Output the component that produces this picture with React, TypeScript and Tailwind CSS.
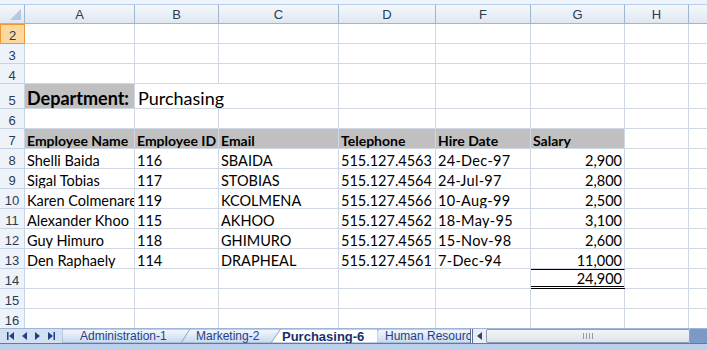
import React from 'react'

const cols = [
  { key: 'A', w: 'w-[110px]' },
  { key: 'B', w: 'w-[84px]' },
  { key: 'C', w: 'w-[120px]' },
  { key: 'D', w: 'w-[97px]' },
  { key: 'F', w: 'w-[95px]' },
  { key: 'G', w: 'w-[94px]' },
  { key: 'H', w: 'w-[64px]' },
  { key: 'I', w: 'w-[64px]' },
]

type Cell = {
  text?: string
  bold?: boolean
  right?: boolean
  fill?: boolean
  date?: boolean
  spill?: boolean
  border?: string
}

const employees = [
  ['Shelli Baida', '116', 'SBAIDA', '515.127.4563', '24-Dec-97', '2,900'],
  ['Sigal Tobias', '117', 'STOBIAS', '515.127.4564', '24-Jul-97', '2,800'],
  ['Karen Colmenares', '119', 'KCOLMENA', '515.127.4566', '10-Aug-99', '2,500'],
  ['Alexander Khoo', '115', 'AKHOO', '515.127.4562', '18-May-95', '3,100'],
  ['Guy Himuro', '118', 'GHIMURO', '515.127.4565', '15-Nov-98', '2,600'],
  ['Den Raphaely', '114', 'DRAPHEAL', '515.127.4561', '7-Dec-94', '11,000'],
]

const headers = ['Employee Name', 'Employee ID', 'Email', 'Telephone', 'Hire Date', 'Salary']

function row(cells: Cell[]): Cell[] {
  const out = [...cells]
  while (out.length < cols.length) out.push({})
  return out
}

const rows: { n: number; tall?: boolean; cells: Cell[] }[] = [
  { n: 2, cells: row([]) },
  { n: 3, cells: row([]) },
  { n: 4, cells: row([]) },
  {
    n: 5,
    tall: true,
    cells: row([{ text: 'Department:', bold: true, fill: true }, { text: 'Purchasing', spill: true }]),
  },
  { n: 6, cells: row([]) },
  { n: 7, cells: row(headers.map((h) => ({ text: h, bold: true, fill: true }))) },
  ...employees.map((e, i) => ({
    n: 8 + i,
    cells: row(e.map((t, j) => ({ text: t, right: j === 5, date: j === 4 }))),
  })),
  { n: 14, cells: row([{}, {}, {}, {}, {}, { text: '24,900', right: true, border: 'total' }]) },
  { n: 15, cells: row([]) },
  { n: 16, cells: row([]) },
]

function Tab({
  label,
  w,
  pad,
  active,
  first,
}: {
  label: string
  w: string
  pad: string
  active?: boolean
  first?: boolean
}) {
  return (
    <div className={`relative ${w} h-full shrink-0 ${first ? '' : '-ml-[10px]'} ${active ? 'z-10' : ''}`}>
      <svg className="absolute inset-0 h-full w-full" preserveAspectRatio="none" viewBox="0 0 100 15">
        <defs>
          <linearGradient id="tabg" x1="0" y1="0" x2="0" y2="1">
            <stop offset="0" stopColor="#f6f9fd" />
            <stop offset="1" stopColor="#c7d8ef" />
          </linearGradient>
        </defs>
        <path
          d={first ? 'M0 0 L0 15 L100 15 L100 0 Z' : 'M0 15 L9 0 L100 0 L100 15 Z'}
          fill={active ? '#ffffff' : 'url(#tabg)'}
          stroke="#8aa4c8"
          strokeWidth="1"
          vectorEffect="non-scaling-stroke"
        />
      </svg>
      <span
        className={`relative flex h-full items-center whitespace-nowrap font-['Liberation_Sans',sans-serif] leading-none ${pad} ${
          active ? 'text-[13px] font-bold text-[#15316a]' : 'text-[12px] text-[#1f3f8a]'
        }`}
      >
        {label}
      </span>
    </div>
  )
}

export default function App() {
  return (
    <div className="h-[350px] w-[707px] overflow-hidden bg-white font-['Lato',sans-serif] text-black">
      {/* Top strip */}
      <div className="h-[5px] border-b border-[#b8cde8] bg-[#eef4fb]" />

      {/* Sheet */}
      <div className="h-[323px] overflow-hidden">
        {/* Column headers */}
        <div className="flex h-[19px] border-b border-[#9eb6ce] bg-gradient-to-b from-[#f5f8fc] to-[#dfe7f1]">
          <div className="relative w-[25px] shrink-0 border-r border-[#9eb6ce]">
            <svg className="absolute bottom-[3px] right-[3px]" width="11" height="11" viewBox="0 0 11 11">
              <path d="M11 0 L11 11 L0 11 Z" fill="#b5c8e0" />
            </svg>
          </div>
          {cols.map((c) => (
            <div
              key={c.key}
              className={`${c.w} flex shrink-0 items-center justify-center border-r border-[#9eb6ce] pt-[2px] font-['Liberation_Sans',sans-serif] text-[13px] text-[#2b3a4f]`}
            >
              {c.key === 'I' ? '' : c.key}
            </div>
          ))}
        </div>

        {/* Rows */}
        {rows.map((r) => (
          <div key={r.n} className={`flex ${r.tall ? 'h-[25px]' : 'h-[20px]'}`}>
            <div
              className={`flex w-[25px] shrink-0 items-end justify-center pb-[1px] font-['Liberation_Sans',sans-serif] text-[13px] leading-none text-[#2b3a4f] ${
                r.n === 2
                  ? 'border border-[#f29536] bg-[#f9d99f]'
                  : 'border-b border-r border-[#c5d3e4] bg-[#eef3fa]'
              }`}
            >
              {r.n}
            </div>
            {r.cells.map((cell, i) => (
              <div
                key={i}
                className={`${cols[i].w} relative flex shrink-0 items-end whitespace-nowrap px-[2px] leading-none ${
                  cell.spill ? 'overflow-visible' : 'overflow-hidden'
                } ${r.tall ? 'pb-[1px]' : 'pb-0'} ${cell.fill ? 'bg-[#c0c0c0]' : ''} ${
                  cell.right ? 'justify-end' : ''
                } ${cell.date ? 'tracking-[0.3px]' : ''} ${
                  cell.border === 'total'
                    ? 'border-t border-r border-double border-t-black border-r-[#d0d7e5] border-b-[3px] border-b-black'
                    : cell.spill
                      ? 'border-b border-[#d0d7e5]'
                      : 'border-b border-r border-[#d0d7e5]'
                } ${
                  r.tall
                    ? cell.bold
                      ? 'text-[18px] font-bold'
                      : 'pl-[3px] text-[18px]'
                    : cell.bold
                      ? 'text-[14px] font-bold'
                      : 'text-[14.5px]'
                }`}
              >
                {cell.text}
              </div>
            ))}
          </div>
        ))}
      </div>

      {/* Tab bar */}
      <div className="flex h-[15px] border-t border-[#9db5d8] bg-[#d3e0f2]">
        <div className="flex w-[62px] shrink-0 items-center justify-around px-[4px] text-[#1f3f8a]">
          <svg width="8" height="8" viewBox="0 0 8 8">
            <rect x="0" y="0" width="1.5" height="8" fill="currentColor" />
            <path d="M7 0 L7 8 L2 4 Z" fill="currentColor" />
          </svg>
          <svg width="6" height="8" viewBox="0 0 6 8">
            <path d="M5 0 L5 8 L0 4 Z" fill="currentColor" />
          </svg>
          <svg width="6" height="8" viewBox="0 0 6 8">
            <path d="M1 0 L1 8 L6 4 Z" fill="currentColor" />
          </svg>
          <svg width="8" height="8" viewBox="0 0 8 8">
            <path d="M1 0 L1 8 L6 4 Z" fill="currentColor" />
            <rect x="6.5" y="0" width="1.5" height="8" fill="currentColor" />
          </svg>
        </div>
        <div className="flex h-full w-[408px] shrink-0 overflow-hidden">
          <Tab label="Administration-1" w="w-[129px]" pad="pl-[18px]" first />
          <Tab label="Marketing-2" w="w-[100px]" pad="pl-[15px]" />
          <Tab label="Purchasing-6" w="w-[107px]" pad="pl-[11px]" active />
          <Tab label="Human Resources-3" w="w-[128px]" pad="pl-[17px]" />
        </div>
        <div className="w-[3px] shrink-0 border-x border-[#5a6f8f] bg-white" />
        <div className="flex w-[13px] shrink-0 items-center justify-center bg-[#e8eef6]">
          <svg width="5" height="8" viewBox="0 0 5 8">
            <path d="M5 0 L5 8 L0 4 Z" fill="#33465f" />
          </svg>
        </div>
        <div className="flex w-[204px] shrink-0 items-center justify-center rounded-[2px] border border-[#8e9fb6] bg-gradient-to-b from-[#f3f5f8] to-[#dde3ea]">
          <div className="flex gap-[2px]">
            <div className="h-[6px] w-px bg-[#8f9bab]" />
            <div className="h-[6px] w-px bg-[#8f9bab]" />
            <div className="h-[6px] w-px bg-[#8f9bab]" />
            <div className="h-[6px] w-px bg-[#8f9bab]" />
          </div>
        </div>
        <div className="flex-1 bg-[#7d99c7]" />
      </div>

      {/* Bottom strip */}
      <div className="h-[7px] border-t border-[#5f7aa8] bg-[#bcd0ec]" />
    </div>
  )
}
